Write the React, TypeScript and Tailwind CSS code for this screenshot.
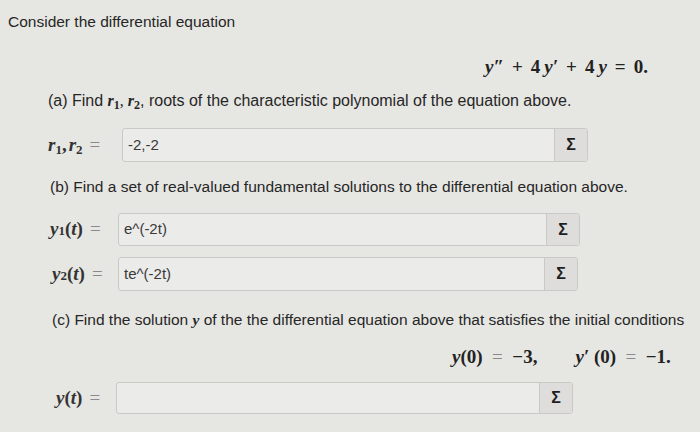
import React from "react";

const serif = { fontFamily: '"Liberation Serif", "DejaVu Serif", serif' };

function M({ children }: { children: React.ReactNode }) {
  return (
    <span className="italic font-semibold" style={serif}>
      {children}
    </span>
  );
}

function Sigma() {
  return (
    <div className="flex w-[33px] shrink-0 items-center justify-center rounded-r-[3px] border-l border-[#c9c9c6] bg-[#dedddb] text-[16px] font-bold text-[#1e1e1e] [font-family:'Liberation_Sans',Arial,sans-serif]">
      Σ
    </div>
  );
}

function InputRow({
  label,
  value,
  ml,
  labelW,
  inputW,
  h,
}: {
  label: React.ReactNode;
  value: string;
  ml: string;
  labelW: string;
  inputW: string;
  h: string;
}) {
  return (
    <div className={`flex items-center ${ml}`}>
      <div className={`${labelW} shrink-0 text-[19px] text-[#333]`}>{label}</div>
      <div className={`flex ${inputW} ${h} rounded-[3px] border border-[#c9c9c6] bg-[#ebebe9]`}>
        <div className="flex flex-1 items-center pl-[5px] text-[15px] text-[#3a3a3a]">{value}</div>
        <Sigma />
      </div>
    </div>
  );
}

function Eq() {
  return <span className="ml-[7px] font-normal not-italic text-[#8a8a8a]" style={serif}>=</span>;
}

function Op({ c }: { c: string }) {
  return <span className="mx-[8px] font-semibold">{c}</span>;
}

export default function App() {
  return (
    <div
      className="h-[432px] w-[700px] overflow-hidden bg-[#e6e6e3] text-[#262626]"
      style={{ fontFamily: '"Liberation Sans", Arial, sans-serif' }}
    >
      <div className="flex flex-col">
        <div className="ml-[8px] mt-[13px] text-[15.5px] leading-[18px]">Consider the differential equation</div>

        <div className="ml-[485px] mt-[25px] flex items-baseline text-[19px] leading-[22px] text-[#222]" style={serif}>
          <span className="italic font-semibold">y″</span>
          <Op c="+" />
          <span className="font-semibold mr-[4px]">4</span>
          <span className="italic font-semibold">y′</span>
          <Op c="+" />
          <span className="font-semibold mr-[4px]">4</span>
          <span className="italic font-semibold">y</span>
          <Op c="=" />
          <span className="font-semibold">0.</span>
        </div>

        <div className="ml-[48px] mt-[13px] text-[16px] leading-[20px]">
          (a) Find <M>r</M>
          <sub className="text-[12px] font-semibold" style={serif}>1</sub>
          <span style={serif}>, </span>
          <M>r</M>
          <sub className="text-[12px] font-semibold" style={serif}>2</sub>, roots of the characteristic polynomial of the equation above.
        </div>

        <div className="mt-[17px]">
          <InputRow
            ml="ml-[48px]"
            labelW="w-[74px]"
            inputW="w-[466px]"
            h="h-[34px]"
            value="-2,-2"
            label={
              <span className="flex items-baseline">
                <M>r</M>
                <sub className="text-[13px] font-semibold" style={serif}>1</sub>
                <span style={serif} className="font-semibold mr-[2px]">,</span>
                <M>r</M>
                <sub className="text-[13px] font-semibold" style={serif}>2</sub>
                <Eq />
              </span>
            }
          />
        </div>

        <div className="ml-[50px] mt-[16px] text-[15.5px] leading-[18px]">
          (b) Find a set of real-valued fundamental solutions to the differential equation above.
        </div>

        <div className="mt-[17px]">
          <InputRow
            ml="ml-[50px]"
            labelW="w-[68px]"
            inputW="w-[462px]"
            h="h-[33px]"
            value="e^(-2t)"
            label={
              <span className="flex items-baseline">
                <M>y</M>
                <span className="text-[13px] font-semibold" style={serif}>1</span>
                <span style={serif} className="font-semibold">(</span>
                <M>t</M>
                <span style={serif} className="font-semibold">)</span>
                <Eq />
              </span>
            }
          />
        </div>

        <div className="mt-[11px]">
          <InputRow
            ml="ml-[52px]"
            labelW="w-[66px]"
            inputW="w-[460px]"
            h="h-[34px]"
            value="te^(-2t)"
            label={
              <span className="flex items-baseline">
                <M>y</M>
                <span className="text-[13px] font-semibold" style={serif}>2</span>
                <span style={serif} className="font-semibold">(</span>
                <M>t</M>
                <span style={serif} className="font-semibold">)</span>
                <Eq />
              </span>
            }
          />
        </div>

        <div className="ml-[52px] mt-[19px] text-[15.5px] leading-[20px]">
          (c) Find the solution <M>y</M> of the the differential equation above that satisfies the initial conditions
        </div>

        <div className="ml-[452px] mt-[16px] flex text-[19px] leading-[22px] text-[#222] whitespace-pre" style={serif}>
          <span>
            <span className="italic font-semibold">y</span>
            <span className="font-semibold">(0)</span>
            <span className="text-[#8a8a8a]">{"  =  "}</span>
            <span className="font-semibold">−3,</span>
          </span>
          <span className="ml-[38px]">
            <span className="italic font-semibold">y′</span>
            <span className="font-semibold"> (0)</span>
            <span className="text-[#8a8a8a]">{"  =  "}</span>
            <span className="font-semibold">−1.</span>
          </span>
        </div>

        <div className="mt-[14px]">
          <InputRow
            ml="ml-[56px]"
            labelW="w-[60px]"
            inputW="w-[457px]"
            h="h-[32px]"
            value=""
            label={
              <span className="flex items-baseline">
                <M>y</M>
                <span style={serif} className="font-semibold">(</span>
                <M>t</M>
                <span style={serif} className="font-semibold">)</span>
                <Eq />
              </span>
            }
          />
        </div>
      </div>
    </div>
  );
}
